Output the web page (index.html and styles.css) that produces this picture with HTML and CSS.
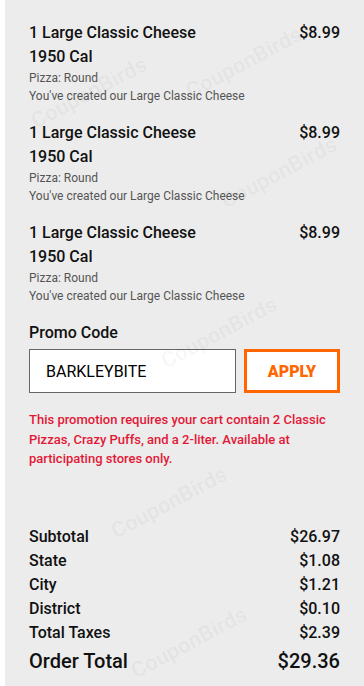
FILE: index.html
```html
<!DOCTYPE html>
<html lang="en">
<head>
    <meta charset="UTF-8">
    <meta name="viewport" content="width=device-width, initial-scale=1.0">
    <title>Cart Summary</title>
    <link rel="stylesheet" href="styles.css">
</head>
<body>
    <div class="cart">
        <div class="item">
            <div class="item-head">
                <span>1 Large Classic Cheese</span>
                <span>$8.99</span>
            </div>
            <div class="cal">1950 Cal</div>
            <div class="detail">Pizza: Round</div>
            <div class="detail">You've created our Large Classic Cheese</div>
        </div>
        <div class="item">
            <div class="item-head">
                <span>1 Large Classic Cheese</span>
                <span>$8.99</span>
            </div>
            <div class="cal">1950 Cal</div>
            <div class="detail">Pizza: Round</div>
            <div class="detail">You've created our Large Classic Cheese</div>
        </div>
        <div class="item">
            <div class="item-head">
                <span>1 Large Classic Cheese</span>
                <span>$8.99</span>
            </div>
            <div class="cal">1950 Cal</div>
            <div class="detail">Pizza: Round</div>
            <div class="detail">You've created our Large Classic Cheese</div>
        </div>

        <div class="promo">
            <label for="promoCode">Promo Code</label>
            <div class="promo-row">
                <input type="text" id="promoCode" value="BARKLEYBITE">
                <button>APPLY</button>
            </div>
            <p class="promo-error">This promotion requires your cart contain 2 Classic Pizzas, Crazy Puffs, and a 2-liter. Available at participating stores only.</p>
        </div>

        <div class="totals">
            <div class="line"><span>Subtotal</span><span>$26.97</span></div>
            <div class="line"><span>State</span><span>$1.08</span></div>
            <div class="line"><span>City</span><span>$1.21</span></div>
            <div class="line"><span>District</span><span>$0.10</span></div>
            <div class="line"><span>Total Taxes</span><span>$2.39</span></div>
            <div class="line grand"><span>Order Total</span><span>$29.36</span></div>
        </div>

        <!-- watermark -->
        <span class="mark" style="left:175px;top:50px">CouponBirds</span>
        <span class="mark" style="left:20px;top:80px">CouponBirds</span>
        <span class="mark" style="left:210px;top:160px">CouponBirds</span>
        <span class="mark" style="left:150px;top:320px">CouponBirds</span>
        <span class="mark" style="left:100px;top:490px">CouponBirds</span>
        <span class="mark" style="left:120px;top:630px">CouponBirds</span>
    </div>
</body>
</html>
```

FILE: styles.css
```css
body {
    margin: 0;
    background-color: #fff;
    font-family: Roboto, "Liberation Sans", Arial, sans-serif;
    color: #111;
}
.cart {
    position: relative;
    overflow: hidden;
    margin-left: 5px;
    min-height: 686px;
    box-sizing: border-box;
    background-color: #ececec;
    padding: 21px 24px 0 24px;
}
.item {
    margin-bottom: 16px;
}
.item-head {
    display: flex;
    justify-content: space-between;
    font-size: 16px;
    font-weight: 500;
    line-height: 24px;
}
.cal {
    font-size: 16px;
    font-weight: 500;
    line-height: 24px;
}
.detail {
    font-size: 12px;
    line-height: 18px;
    color: #555;
}
.promo label {
    display: block;
    font-size: 16px;
    font-weight: 500;
    line-height: 24px;
}
.promo-row {
    display: flex;
    gap: 8px;
    margin-top: 4px;
}
.promo-row input {
    width: 207px;
    height: 44px;
    box-sizing: border-box;
    border: 1px solid #666;
    background: #fff;
    padding: 0 16px;
    font-family: inherit;
    font-size: 16px;
    color: #000;
}
.promo-row button {
    width: 97px;
    height: 44px;
    box-sizing: border-box;
    border: 3px solid #ff6600;
    background: #fff;
    color: #ff6600;
    font-family: inherit;
    font-size: 16px;
    font-weight: 900;
    cursor: pointer;
}
.promo-error {
    margin: 17px 0 0;
    font-size: 13px;
    font-weight: 500;
    line-height: 19.5px;
    color: #e31837;
}
.totals {
    margin-top: 56px;
}
.line {
    display: flex;
    justify-content: space-between;
    font-size: 16px;
    font-weight: 500;
    line-height: 24px;
}
.line.grand {
    margin-top: 2px;
    font-size: 20px;
    line-height: 28px;
}
.mark {
    position: absolute;
    transform: rotate(-28deg);
    font-size: 22px;
    font-weight: 700;
    color: rgba(0, 0, 0, 0.035);
    white-space: nowrap;
    pointer-events: none;
}
```
